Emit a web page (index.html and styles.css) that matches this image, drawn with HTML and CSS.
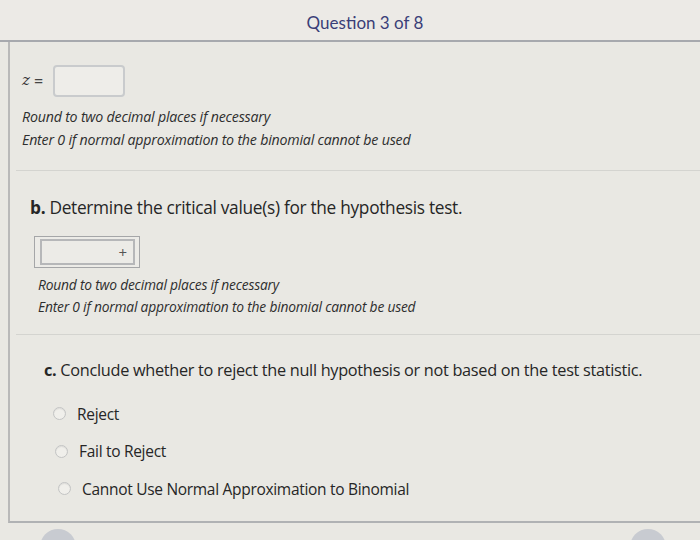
FILE: index.html
```html
<!DOCTYPE html>
<html>
<head>
<meta charset="utf-8">
<link rel="stylesheet" href="styles.css">
</head>
<body>
<header class="top">
  <div class="title">Question 3 of 8</div>
</header>
<main class="panel">
  <section class="part part-a">
    <div class="zrow">
      <span class="zvar">z</span><span class="eq">=</span>
      <span class="zinput"></span>
    </div>
    <p class="hint">Round to two decimal places if necessary<br>Enter 0 if normal approximation to the binomial cannot be used</p>
  </section>
  <section class="part part-b">
    <h2 class="q"><b>b.</b> Determine the critical value(s) for the hypothesis test.</h2>
    <div class="multi">
      <div class="multi-inner"><span class="plus">+</span></div>
    </div>
    <p class="hint small">Round to two decimal places if necessary<br>Enter 0 if normal approximation to the binomial cannot be used</p>
  </section>
  <section class="part part-c">
    <h2 class="q qc"><b>c.</b> Conclude whether to reject the null hypothesis or not based on the test statistic.</h2>
    <ul class="opts">
      <li class="opt o1"><span class="radio"></span>Reject</li>
      <li class="opt o2"><span class="radio"></span>Fail to Reject</li>
      <li class="opt o3"><span class="radio"></span>Cannot Use Normal Approximation to Binomial</li>
    </ul>
  </section>
</main>
<footer class="foot">
  <span class="btn left"></span>
  <span class="btn right"></span>
</footer>
</body>
</html>
```
FILE: styles.css
```css
* { box-sizing: border-box; }
html, body { margin: 0; padding: 0; }
body {
  width: 700px;
  height: 540px;
  overflow: hidden;
  background: #e9e8e3;
  font-family: "Open Sans", "Liberation Sans", sans-serif;
  color: #2a2a2a;
}
.top {
  height: 42px;
  border-bottom: 2px solid #a7a9ae;
  display: flex;
  justify-content: center;
  align-items: center;
  padding-left: 30px;
  background: #eceae6;
}
.title {
  font-family: "Lato", sans-serif;
  font-size: 17px;
  color: #3a3e78;
  margin-top: 4px;
}
.panel {
  margin-left: 8px;
  border-left: 2px solid #b9b9b9;
  height: 481px;
  border-bottom: 2px solid #b0b2b4;
  display: flex;
  flex-direction: column;
}
.part-a {
  padding: 23px 0 0 6px;
  height: 129px;
  border-bottom: 1px solid #d4d4d0;
  margin-left: 6px;
}
.zrow {
  display: flex;
  align-items: center;
  gap: 4px;
}
.zvar { font-family: "DejaVu Serif", serif; font-size: 15px; font-style: italic; color: #333; margin-top: -2px; }
.eq { font-size: 16px; color: #444; margin-right: 6px; }
.zinput {
  width: 72px;
  height: 32px;
  border: 2px solid #c9cbcd;
  border-radius: 4px;
  background: #eeede9;
}
.hint {
  margin: 8px 0 0 0;
  font-style: italic;
  font-size: 14.2px;
  line-height: 23px;
  color: #2e2e2e;
  letter-spacing: -0.2px;
}
.part-b {
  padding: 25px 0 0 14px;
  height: 164px;
  border-bottom: 1px solid #d4d4d0;
  margin-left: 6px;
}
.q {
  margin: 0;
  font-weight: normal;
  font-size: 17.3px;
  letter-spacing: -0.3px;
  color: #262626;
}
.q.qc { font-size: 16.3px; }
.q b { font-weight: 700; }
.multi {
  margin: 17px 0 0 4px;
  width: 106px;
  height: 32px;
  border: 1px solid #a5a6a8;
  padding: 2px 4px 2px 5px;
  background: #ecebe7;
}
.multi-inner {
  height: 100%;
  border: 2px solid #b6b7b9;
  display: flex;
  justify-content: flex-end;
  align-items: center;
  padding-right: 6px;
}
.plus { font-size: 15px; color: #555; line-height: 1; }
.hint.small {
  margin-top: 6px;
  margin-left: 8px;
  font-size: 13.8px;
  line-height: 22px;
}
.part-c {
  padding: 24px 0 0 28px;
  margin-left: 6px;
}
.opts { list-style: none; margin: 14px 0 0 0; padding: 0 0 0 9px; }
.opt {
  display: flex;
  align-items: center;
  font-size: 15.5px;
  letter-spacing: -0.3px;
  height: 37.5px;
  color: #262626;
}
.o2 { padding-left: 2px; }
.o3 { padding-left: 5px; }
.radio {
  width: 13px;
  height: 13px;
  border-radius: 50%;
  border: 1px solid #c3c4c4;
  background: #f0efeb;
  margin-right: 11px;
  box-shadow: inset 0 1px 1px rgba(0,0,0,0.08);
}
.foot {
  position: relative;
  height: 17px;
}
.btn {
  position: absolute;
  top: 6px;
  width: 36px;
  height: 36px;
  border-radius: 50%;
  background: #c8cbd1;
}
.btn.left { left: 40px; }
.btn.right { left: 630px; }
```
